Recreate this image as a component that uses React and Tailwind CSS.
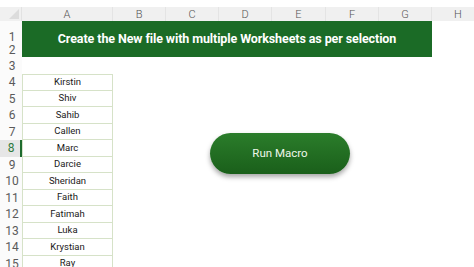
import React from "react";

const cols = [
  { l: "A", w: 91 },
  { l: "B", w: 53 },
  { l: "C", w: 53 },
  { l: "D", w: 53 },
  { l: "E", w: 54 },
  { l: "F", w: 53 },
  { l: "G", w: 53 },
  { l: "H", w: 53 },
];

const names = [
  "Kirstin",
  "Shiv",
  "Sahib",
  "Callen",
  "Marc",
  "Darcie",
  "Sheridan",
  "Faith",
  "Fatimah",
  "Luka",
  "Krystian",
  "Ray",
];

export default function App() {
  return (
    <div
      className="w-[474px] h-[267px] overflow-hidden bg-white pt-[7px]"
      style={{ fontFamily: "Roboto, 'Liberation Sans', sans-serif" }}
    >
      {/* column headers */}
      <div className="flex h-[14px] bg-[#f0f0f0]">
        <div className="w-[22px] shrink-0 relative border-r border-[#e2e2e2]">
          <svg className="absolute right-[2px] bottom-[2px]" width="10" height="10" viewBox="0 0 10 10">
            <polygon points="10,0 10,10 0,10" fill="#dcdcdc" />
          </svg>
        </div>
        {cols.map((c) => (
          <div
            key={c.l}
            className="shrink-0 flex items-center justify-center text-[11px] font-light text-[#555] border-r border-[#e4e4e4] leading-none"
            style={{ width: c.w }}
          >
            {c.l}
          </div>
        ))}
      </div>

      <div className="flex">
        {/* row headers */}
        <div className="w-[22px] shrink-0 flex flex-col bg-[#fbfbfb] text-[12px] text-[#5a5a5a] leading-none">
          <div className="h-[22px] flex items-end justify-center pl-[2px]">1</div>
          <div className="h-[14px] flex items-center justify-center pl-[2px]">2</div>
          <div className="h-[17px] flex items-center justify-center pl-[2px]">3</div>
          {names.map((n, i) => {
            const num = i + 4;
            const sel = num === 8;
            return (
              <div
                key={num}
                className={
                  "h-[16.5px] flex items-center justify-center pl-[2px] " +
                  (sel ? "bg-[#e6e6e6] text-[#2f7a3e] border-r-2 border-[#1e6b2e]" : "")
                }
              >
                {num}
              </div>
            );
          })}
        </div>

        {/* sheet content */}
        <div className="flex flex-col flex-1">
          <div className="h-[36px] w-[410px] bg-[#1b6b26] flex items-center justify-center">
            <span className="text-white text-[12.5px] font-bold tracking-[-0.1px]">
              Create the New file with multiple Worksheets as per selection
            </span>
          </div>
          <div className="h-[17px]" />
          <div className="flex">
            <div className="w-[91px] flex flex-col">
              {names.map((n) => (
                <div
                  key={n}
                  className="h-[16.5px] flex items-center justify-center text-[9.5px] text-[#1a1a1a] border border-t-0 border-[#d6e2c8] first:border-t"
                >
                  {n}
                </div>
              ))}
            </div>
            <div className="pl-[97px] pt-[59px]">
              <div className="w-[140px] h-[41px] rounded-full bg-gradient-to-b from-[#2b7d2b] to-[#1a5f1a] shadow-[0_3px_5px_rgba(0,0,0,0.35)] flex items-center justify-center text-[11.5px] text-[#eef7ea]">
                Run Macro
              </div>
            </div>
          </div>
        </div>
      </div>
    </div>
  );
}
